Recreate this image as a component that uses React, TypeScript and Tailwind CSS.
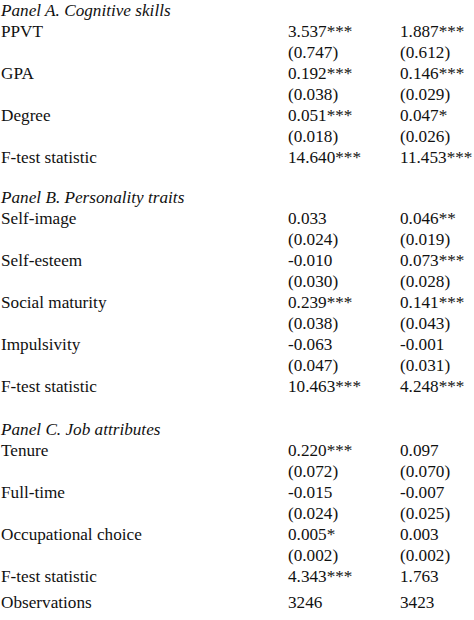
type Row = { label: string; a: string; b: string };

const panels: { title: string; rows: Row[]; gapTop: string }[] = [
  {
    title: "Panel A. Cognitive skills",
    gapTop: "",
    rows: [
      { label: "PPVT", a: "3.537***", b: "1.887***" },
      { label: "", a: "(0.747)", b: "(0.612)" },
      { label: "GPA", a: "0.192***", b: "0.146***" },
      { label: "", a: "(0.038)", b: "(0.029)" },
      { label: "Degree", a: "0.051***", b: "0.047*" },
      { label: "", a: "(0.018)", b: "(0.026)" },
      { label: "F-test statistic", a: "14.640***", b: "11.453***" },
    ],
  },
  {
    title: "Panel B. Personality traits",
    gapTop: "mt-[19px]",
    rows: [
      { label: "Self-image", a: "0.033", b: "0.046**" },
      { label: "", a: "(0.024)", b: "(0.019)" },
      { label: "Self-esteem", a: "-0.010", b: "0.073***" },
      { label: "", a: "(0.030)", b: "(0.028)" },
      { label: "Social maturity", a: "0.239***", b: "0.141***" },
      { label: "", a: "(0.038)", b: "(0.043)" },
      { label: "Impulsivity", a: "-0.063", b: "-0.001" },
      { label: "", a: "(0.047)", b: "(0.031)" },
      { label: "F-test statistic", a: "10.463***", b: "4.248***" },
    ],
  },
  {
    title: "Panel C. Job attributes",
    gapTop: "mt-[22px]",
    rows: [
      { label: "Tenure", a: "0.220***", b: "0.097" },
      { label: "", a: "(0.072)", b: "(0.070)" },
      { label: "Full-time", a: "-0.015", b: "-0.007" },
      { label: "", a: "(0.024)", b: "(0.025)" },
      { label: "Occupational choice", a: "0.005*", b: "0.003" },
      { label: "", a: "(0.002)", b: "(0.002)" },
      { label: "F-test statistic", a: "4.343***", b: "1.763" },
    ],
  },
];

function TableRow({ label, a, b }: Row) {
  return (
    <div className="grid grid-cols-[288px_112px_1fr] h-[21px] leading-[21px] whitespace-nowrap">
      <div className="pl-[1px]">{label}</div>
      <div>{a}</div>
      <div>{b}</div>
    </div>
  );
}

export default function App() {
  return (
    <div
      className="w-[474px] h-[620px] overflow-hidden bg-white text-[#111] text-[17.2px]"
      style={{ fontFamily: '"Liberation Serif", "Times New Roman", serif' }}
    >
      {panels.map((p) => (
        <div key={p.title} className={p.gapTop}>
          <div className="h-[21px] leading-[21px] pl-[1px] italic whitespace-nowrap">{p.title}</div>
          {p.rows.map((r, i) => (
            <TableRow key={i} {...r} />
          ))}
        </div>
      ))}
      <div className="mt-[5px]">
        <TableRow label="Observations" a="3246" b="3423" />
      </div>
    </div>
  );
}
